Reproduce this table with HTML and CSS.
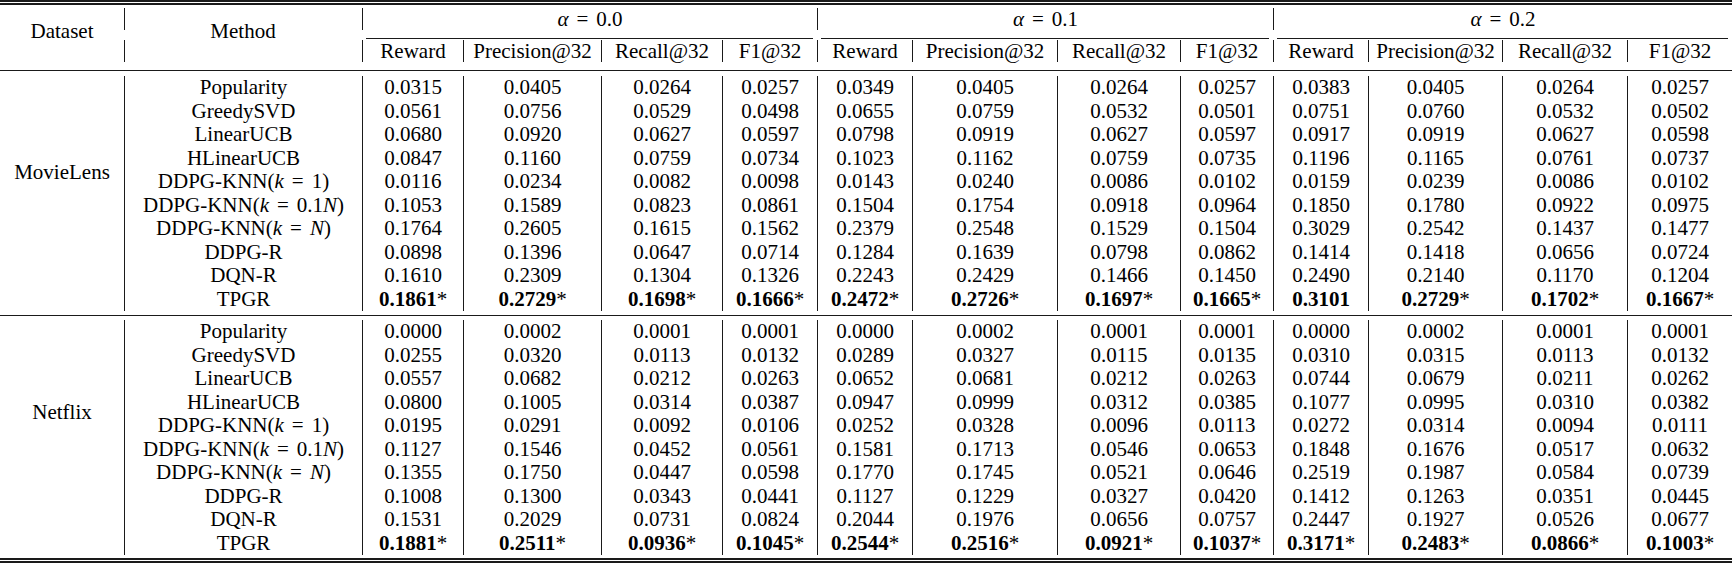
FILE: index.html
```html
<!DOCTYPE html>
<html lang="en">
<head>
<meta charset="utf-8">
<title>Results table</title>
<link rel="stylesheet" href="styles.css">
</head>
<body>
<table class="results">
  <colgroup>
    <col class="c-ds"><col class="c-me">
    <col class="c-r1"><col class="c-p1"><col class="c-re1"><col class="c-f1">
    <col class="c-r2"><col class="c-p2"><col class="c-re2"><col class="c-f2">
    <col class="c-r3"><col class="c-p3"><col class="c-re3"><col class="c-f3">
  </colgroup>
  <thead>
    <tr class="pad3"><td colspan="14"></td></tr>
    <tr class="h1">
      <td></td><td class="vl"></td>
      <th class="vl" colspan="4"><i>α</i><span class="eq">=</span>0.0</th>
      <th class="vl" colspan="4"><i>α</i><span class="eq">=</span>0.1</th>
      <th class="vl" colspan="4"><i>α</i><span class="eq">=</span>0.2</th>
    </tr>
    <tr class="g1">
      <th class="lab">Dataset</th><th class="lab">Method</th>
      <td colspan="4" class="cm"><div class="cmid"></div></td>
      <td colspan="4" class="cm"><div class="cmid"></div></td>
      <td colspan="4" class="cm"><div class="cmid"></div></td>
    </tr>
    <tr class="h2">
      <td></td><td class="vl"></td>
      <th class="vl">Reward</th><th class="vl">Precision@32</th><th class="vl">Recall@32</th><th class="vl">F1@32</th>
      <th class="vl">Reward</th><th class="vl">Precision@32</th><th class="vl">Recall@32</th><th class="vl">F1@32</th>
      <th class="vl">Reward</th><th class="vl">Precision@32</th><th class="vl">Recall@32</th><th class="vl">F1@32</th>
    </tr>
    <tr class="pad8"><td colspan="14"></td></tr>
    <tr class="rule"><td colspan="14"></td></tr>
  </thead>
  <tbody>
    <tr class="pad5"><td colspan="14"></td></tr>
    <tr><td class="ds" rowspan="10">MovieLens</td><td class="vl">Popularity</td>
      <td class="vl">0.0315</td><td class="vl">0.0405</td><td class="vl">0.0264</td><td class="vl">0.0257</td>
      <td class="vl">0.0349</td><td class="vl">0.0405</td><td class="vl">0.0264</td><td class="vl">0.0257</td>
      <td class="vl">0.0383</td><td class="vl">0.0405</td><td class="vl">0.0264</td><td class="vl">0.0257</td></tr>
    <tr><td class="vl">GreedySVD</td>
      <td class="vl">0.0561</td><td class="vl">0.0756</td><td class="vl">0.0529</td><td class="vl">0.0498</td>
      <td class="vl">0.0655</td><td class="vl">0.0759</td><td class="vl">0.0532</td><td class="vl">0.0501</td>
      <td class="vl">0.0751</td><td class="vl">0.0760</td><td class="vl">0.0532</td><td class="vl">0.0502</td></tr>
    <tr><td class="vl">LinearUCB</td>
      <td class="vl">0.0680</td><td class="vl">0.0920</td><td class="vl">0.0627</td><td class="vl">0.0597</td>
      <td class="vl">0.0798</td><td class="vl">0.0919</td><td class="vl">0.0627</td><td class="vl">0.0597</td>
      <td class="vl">0.0917</td><td class="vl">0.0919</td><td class="vl">0.0627</td><td class="vl">0.0598</td></tr>
    <tr><td class="vl">HLinearUCB</td>
      <td class="vl">0.0847</td><td class="vl">0.1160</td><td class="vl">0.0759</td><td class="vl">0.0734</td>
      <td class="vl">0.1023</td><td class="vl">0.1162</td><td class="vl">0.0759</td><td class="vl">0.0735</td>
      <td class="vl">0.1196</td><td class="vl">0.1165</td><td class="vl">0.0761</td><td class="vl">0.0737</td></tr>
    <tr><td class="vl">DDPG-KNN(<i>k</i><span class="eq">=</span>1)</td>
      <td class="vl">0.0116</td><td class="vl">0.0234</td><td class="vl">0.0082</td><td class="vl">0.0098</td>
      <td class="vl">0.0143</td><td class="vl">0.0240</td><td class="vl">0.0086</td><td class="vl">0.0102</td>
      <td class="vl">0.0159</td><td class="vl">0.0239</td><td class="vl">0.0086</td><td class="vl">0.0102</td></tr>
    <tr><td class="vl">DDPG-KNN(<i>k</i><span class="eq">=</span>0.1<i>N</i>)</td>
      <td class="vl">0.1053</td><td class="vl">0.1589</td><td class="vl">0.0823</td><td class="vl">0.0861</td>
      <td class="vl">0.1504</td><td class="vl">0.1754</td><td class="vl">0.0918</td><td class="vl">0.0964</td>
      <td class="vl">0.1850</td><td class="vl">0.1780</td><td class="vl">0.0922</td><td class="vl">0.0975</td></tr>
    <tr><td class="vl">DDPG-KNN(<i>k</i><span class="eq">=</span><i>N</i>)</td>
      <td class="vl">0.1764</td><td class="vl">0.2605</td><td class="vl">0.1615</td><td class="vl">0.1562</td>
      <td class="vl">0.2379</td><td class="vl">0.2548</td><td class="vl">0.1529</td><td class="vl">0.1504</td>
      <td class="vl">0.3029</td><td class="vl">0.2542</td><td class="vl">0.1437</td><td class="vl">0.1477</td></tr>
    <tr><td class="vl">DDPG-R</td>
      <td class="vl">0.0898</td><td class="vl">0.1396</td><td class="vl">0.0647</td><td class="vl">0.0714</td>
      <td class="vl">0.1284</td><td class="vl">0.1639</td><td class="vl">0.0798</td><td class="vl">0.0862</td>
      <td class="vl">0.1414</td><td class="vl">0.1418</td><td class="vl">0.0656</td><td class="vl">0.0724</td></tr>
    <tr><td class="vl">DQN-R</td>
      <td class="vl">0.1610</td><td class="vl">0.2309</td><td class="vl">0.1304</td><td class="vl">0.1326</td>
      <td class="vl">0.2243</td><td class="vl">0.2429</td><td class="vl">0.1466</td><td class="vl">0.1450</td>
      <td class="vl">0.2490</td><td class="vl">0.2140</td><td class="vl">0.1170</td><td class="vl">0.1204</td></tr>
    <tr><td class="vl">TPGR</td>
      <td class="vl"><b>0.1861</b>*</td><td class="vl"><b>0.2729</b>*</td><td class="vl"><b>0.1698</b>*</td><td class="vl"><b>0.1666</b>*</td>
      <td class="vl"><b>0.2472</b>*</td><td class="vl"><b>0.2726</b>*</td><td class="vl"><b>0.1697</b>*</td><td class="vl"><b>0.1665</b>*</td>
      <td class="vl"><b>0.3101</b></td><td class="vl"><b>0.2729</b>*</td><td class="vl"><b>0.1702</b>*</td><td class="vl"><b>0.1667</b>*</td></tr>
    <tr class="pad4"><td colspan="14"></td></tr>
    <tr class="rule"><td colspan="14"></td></tr>
  </tbody>
  <tbody>
    <tr class="pad4"><td colspan="14"></td></tr>
    <tr><td class="ds ds-nf" rowspan="10">Netflix</td><td class="vl">Popularity</td>
      <td class="vl">0.0000</td><td class="vl">0.0002</td><td class="vl">0.0001</td><td class="vl">0.0001</td>
      <td class="vl">0.0000</td><td class="vl">0.0002</td><td class="vl">0.0001</td><td class="vl">0.0001</td>
      <td class="vl">0.0000</td><td class="vl">0.0002</td><td class="vl">0.0001</td><td class="vl">0.0001</td></tr>
    <tr><td class="vl">GreedySVD</td>
      <td class="vl">0.0255</td><td class="vl">0.0320</td><td class="vl">0.0113</td><td class="vl">0.0132</td>
      <td class="vl">0.0289</td><td class="vl">0.0327</td><td class="vl">0.0115</td><td class="vl">0.0135</td>
      <td class="vl">0.0310</td><td class="vl">0.0315</td><td class="vl">0.0113</td><td class="vl">0.0132</td></tr>
    <tr><td class="vl">LinearUCB</td>
      <td class="vl">0.0557</td><td class="vl">0.0682</td><td class="vl">0.0212</td><td class="vl">0.0263</td>
      <td class="vl">0.0652</td><td class="vl">0.0681</td><td class="vl">0.0212</td><td class="vl">0.0263</td>
      <td class="vl">0.0744</td><td class="vl">0.0679</td><td class="vl">0.0211</td><td class="vl">0.0262</td></tr>
    <tr><td class="vl">HLinearUCB</td>
      <td class="vl">0.0800</td><td class="vl">0.1005</td><td class="vl">0.0314</td><td class="vl">0.0387</td>
      <td class="vl">0.0947</td><td class="vl">0.0999</td><td class="vl">0.0312</td><td class="vl">0.0385</td>
      <td class="vl">0.1077</td><td class="vl">0.0995</td><td class="vl">0.0310</td><td class="vl">0.0382</td></tr>
    <tr><td class="vl">DDPG-KNN(<i>k</i><span class="eq">=</span>1)</td>
      <td class="vl">0.0195</td><td class="vl">0.0291</td><td class="vl">0.0092</td><td class="vl">0.0106</td>
      <td class="vl">0.0252</td><td class="vl">0.0328</td><td class="vl">0.0096</td><td class="vl">0.0113</td>
      <td class="vl">0.0272</td><td class="vl">0.0314</td><td class="vl">0.0094</td><td class="vl">0.0111</td></tr>
    <tr><td class="vl">DDPG-KNN(<i>k</i><span class="eq">=</span>0.1<i>N</i>)</td>
      <td class="vl">0.1127</td><td class="vl">0.1546</td><td class="vl">0.0452</td><td class="vl">0.0561</td>
      <td class="vl">0.1581</td><td class="vl">0.1713</td><td class="vl">0.0546</td><td class="vl">0.0653</td>
      <td class="vl">0.1848</td><td class="vl">0.1676</td><td class="vl">0.0517</td><td class="vl">0.0632</td></tr>
    <tr><td class="vl">DDPG-KNN(<i>k</i><span class="eq">=</span><i>N</i>)</td>
      <td class="vl">0.1355</td><td class="vl">0.1750</td><td class="vl">0.0447</td><td class="vl">0.0598</td>
      <td class="vl">0.1770</td><td class="vl">0.1745</td><td class="vl">0.0521</td><td class="vl">0.0646</td>
      <td class="vl">0.2519</td><td class="vl">0.1987</td><td class="vl">0.0584</td><td class="vl">0.0739</td></tr>
    <tr><td class="vl">DDPG-R</td>
      <td class="vl">0.1008</td><td class="vl">0.1300</td><td class="vl">0.0343</td><td class="vl">0.0441</td>
      <td class="vl">0.1127</td><td class="vl">0.1229</td><td class="vl">0.0327</td><td class="vl">0.0420</td>
      <td class="vl">0.1412</td><td class="vl">0.1263</td><td class="vl">0.0351</td><td class="vl">0.0445</td></tr>
    <tr><td class="vl">DQN-R</td>
      <td class="vl">0.1531</td><td class="vl">0.2029</td><td class="vl">0.0731</td><td class="vl">0.0824</td>
      <td class="vl">0.2044</td><td class="vl">0.1976</td><td class="vl">0.0656</td><td class="vl">0.0757</td>
      <td class="vl">0.2447</td><td class="vl">0.1927</td><td class="vl">0.0526</td><td class="vl">0.0677</td></tr>
    <tr><td class="vl">TPGR</td>
      <td class="vl"><b>0.1881</b>*</td><td class="vl"><b>0.2511</b>*</td><td class="vl"><b>0.0936</b>*</td><td class="vl"><b>0.1045</b>*</td>
      <td class="vl"><b>0.2544</b>*</td><td class="vl"><b>0.2516</b>*</td><td class="vl"><b>0.0921</b>*</td><td class="vl"><b>0.1037</b>*</td>
      <td class="vl"><b>0.3171</b>*</td><td class="vl"><b>0.2483</b>*</td><td class="vl"><b>0.0866</b>*</td><td class="vl"><b>0.1003</b>*</td></tr>
    <tr class="pad3"><td colspan="14"></td></tr>
  </tbody>
</table>
</body>
</html>
```
FILE: styles.css
```css
html, body {
  margin: 0;
  padding: 0;
  background: #ffffff;
}

body {
  font-family: "Liberation Serif", "Times New Roman", serif;
  font-size: 21px;
  color: #000000;
}

.results {
  width: 1732px;
  table-layout: fixed;
  border-collapse: separate;
  border-spacing: 0;
  border-top: 5px double #1a1a1a;
  border-bottom: 5px double #1a1a1a;
}

.c-ds { width: 124px; }
.c-me { width: 238px; }
.c-r1 { width: 101px; }
.c-p1 { width: 138px; }
.c-re1 { width: 121px; }
.c-f1 { width: 95px; }
.c-r2 { width: 95px; }
.c-p2 { width: 145px; }
.c-re2 { width: 123px; }
.c-f2 { width: 93px; }
.c-r3 { width: 95px; }
.c-p3 { width: 134px; }
.c-re3 { width: 125px; }
.c-f3 { width: 105px; }

.results td,
.results th {
  padding: 0;
  text-align: center;
  font-weight: normal;
  white-space: nowrap;
  line-height: 23.5px;
  vertical-align: middle;
}

.results b {
  font-weight: bold;
}

.eq {
  margin: 0 0.38em;
}

.vl {
  border-left: 1px solid #1a1a1a;
}

.pad3 td { height: 3px; line-height: 0; }
.pad4 td { height: 4px; line-height: 0; }
.pad5 td { height: 5px; line-height: 0; }
.pad8 td { height: 8px; line-height: 0; }

.rule td {
  height: 0;
  line-height: 0;
  border-top: 1px solid #1a1a1a;
}

.h1 td, .h1 th,
.h2 td, .h2 th {
  height: 22px;
  line-height: 22px;
}

.results .g1 .lab {
  line-height: 0;
  vertical-align: middle;
  padding-bottom: 8px;
}

.results .g1 .cm {
  height: 10px;
  line-height: 0;
  vertical-align: top;
}

.cmid {
  height: 8px;
  margin: 0 4px;
  border-bottom: 1px solid #1a1a1a;
}

.results .ds {
  vertical-align: middle;
  padding-bottom: 42px;
}

.results .ds-nf {
  padding-bottom: 50px;
}
```
